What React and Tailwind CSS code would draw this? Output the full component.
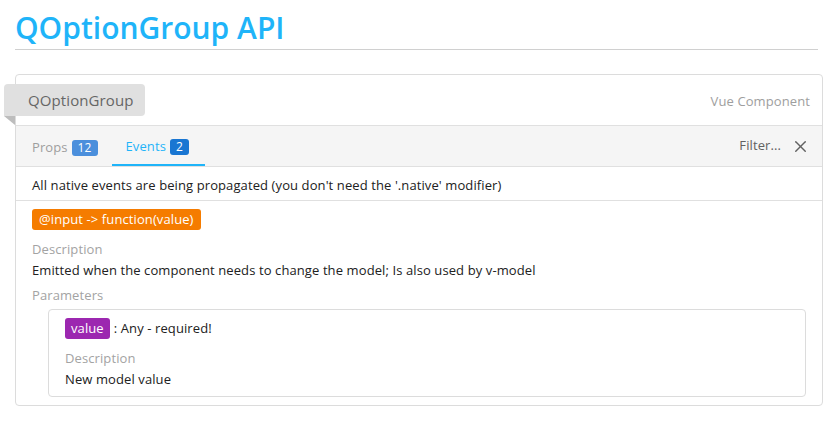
import { X } from 'lucide-react'

const font = { fontFamily: '"Open Sans", "Noto Sans", sans-serif' }

function Label({ children }) {
  return <div className="text-[13px] leading-5 text-[#a3a3a3]">{children}</div>
}

export default function App() {
  return (
    <div className="w-[833px] h-[424px] bg-white px-[15px] pt-[8px] text-[#212121] tracking-[0.1px]" style={font}>
      <h1 className="text-[30px] leading-[40px] font-semibold text-[#1fb4f9] border-b border-[#d0d0d0] pb-[1px] tracking-normal">
        QOptionGroup API
      </h1>

      <div className="mt-[24px] w-[808px] border border-[#dcdcdc] rounded-[4px]">
        {/* header */}
        <div className="flex items-start justify-between h-[51px] border-b border-[#e0e0e0]">
          <div className="relative -ml-[12px] mt-[9px]">
            <div className="h-[32px] pl-[24px] pr-[11px] flex items-center bg-[#e0e0e0] rounded-t-[4px] rounded-br-[4px] text-[15px] text-[#666]">
              QOptionGroup
            </div>
            <div className="w-0 h-0 border-l-[11px] border-t-[9px] border-t-[#bdbdbd]" style={{ borderLeftColor: 'transparent' }} />
          </div>
          <div className="mt-[17px] mr-[12px] text-[13px] text-[#9e9e9e]">Vue Component</div>
        </div>

        {/* tabs */}
        <div className="flex items-stretch justify-between h-[41px] bg-[#f5f5f5] border-b border-[#e0e0e0]">
          <div className="flex">
            <div className="flex items-center gap-[4px] pl-[16px] pr-[14px] pt-[3px] text-[13px] text-[#9e9e9e]">
              Props
              <span className="px-[6px] h-[16px] leading-[16px] rounded-[3px] bg-[#4b8fdc] text-white text-[12px]">12</span>
            </div>
            <div className="flex items-center gap-[4px] pl-[14px] pr-[16px] pt-[3px] text-[13px] text-[#1fb4f9] border-b-2 border-[#1fb4f9]">
              Events
              <span className="px-[6px] h-[16px] leading-[16px] rounded-[3px] bg-[#1976d2] text-white text-[12px]">2</span>
            </div>
          </div>
          <div className="flex items-center gap-[10px] pr-[12px] text-[13px] text-[#616161]">
            Filter...
            <X className="w-[19px] h-[19px] text-[#616161]" strokeWidth={1.8} />
          </div>
        </div>

        {/* note */}
        <div className="h-[34px] flex items-center px-[16px] pt-[4px] text-[13px] border-b border-[#e0e0e0]">
          All native events are being propagated (you don't need the '.native' modifier)
        </div>

        {/* event */}
        <div className="px-[16px] pt-[8px] pb-[8px]">
          <div className="flex">
            <span className="h-[21px] leading-[21px] px-[7px] rounded-[3px] bg-[#f57c00] text-white text-[13px]">
              @input -&gt; function(value)
            </span>
          </div>
          <div className="mt-[9px]">
            <Label>Description</Label>
            <div className="text-[13px] leading-5 mt-[1px]">
              Emitted when the component needs to change the model; Is also used by v-model
            </div>
          </div>
          <div className="mt-[5px]">
            <Label>Parameters</Label>
          </div>
          <div className="ml-[16px] mt-[4px] border border-[#dcdcdc] rounded-[4px] px-[16px] pt-[8px] pb-[7px]">
            <div className="flex items-center gap-[4px] text-[13px]">
              <span className="h-[21px] leading-[21px] px-[6px] rounded-[3px] bg-[#9c27b0] text-white">value</span>
              : Any - required!
            </div>
            <div className="mt-[9px]">
              <Label>Description</Label>
              <div className="text-[13px] leading-5 mt-[1px]">New model value</div>
            </div>
          </div>
        </div>
      </div>
    </div>
  )
}
